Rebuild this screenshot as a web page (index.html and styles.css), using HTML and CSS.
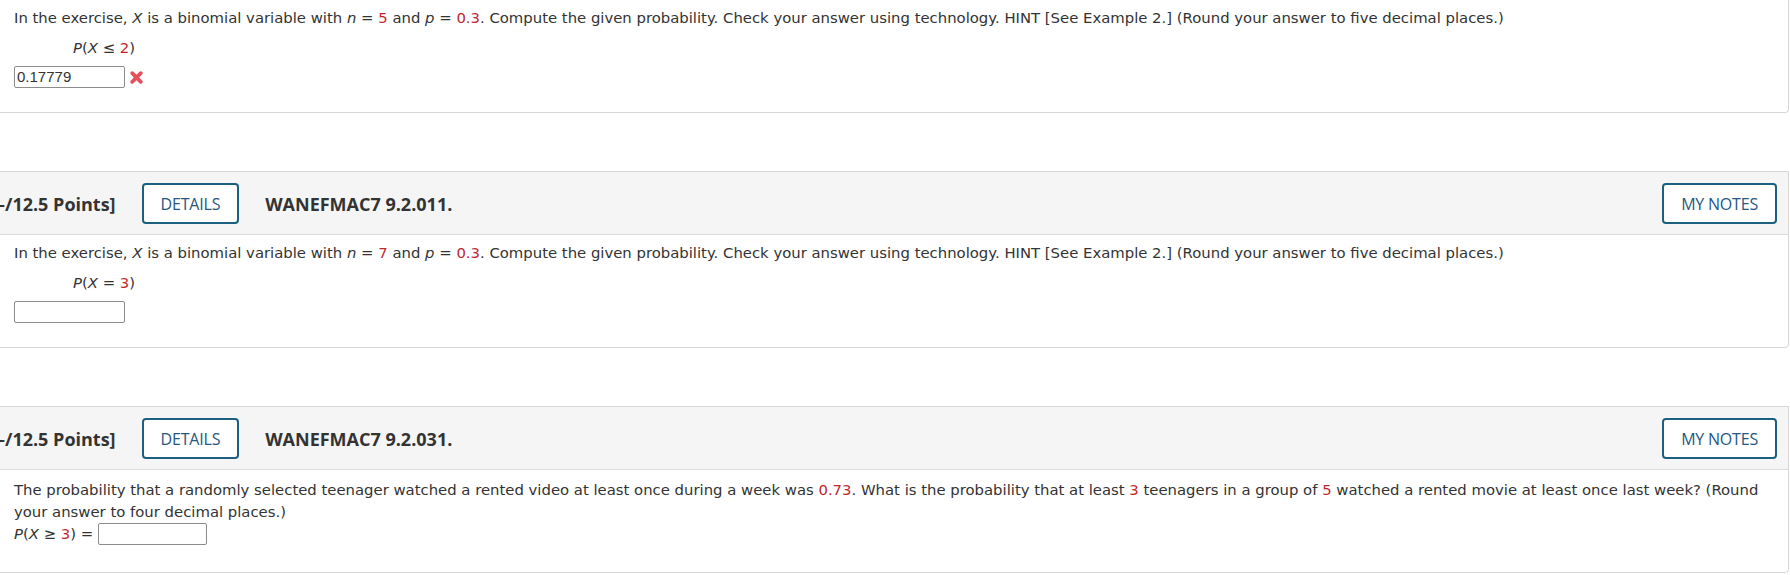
FILE: index.html
```html
<!DOCTYPE html>
<html>
<head>
<meta charset="utf-8">
<link rel="stylesheet" href="styles.css">
</head>
<body>
<div class="page">
  <section class="card card-first">
    <div class="card-body">
      <p class="stem">In the exercise, <i>X</i> is a binomial variable with <i>n</i> = <span class="red">5</span> and <i>p</i> = <span class="red">0.3</span>. Compute the given probability. Check your answer using technology. HINT [See Example 2.] (Round your answer to five decimal places.)</p>
      <p class="expr"><i>P</i>(<i>X</i> ≤ <span class="red">2</span>)</p>
      <div class="answer-row">
        <span class="answer">0.17779</span>
        <svg class="wrong" width="15" height="15" viewBox="0 0 15 15"><path d="M3.2 3.2 L11.8 11.8 M11.8 3.2 L3.2 11.8" stroke="#e4515a" stroke-width="3.8" stroke-linecap="round"/></svg>
      </div>
    </div>
  </section>

  <section class="card">
    <header class="card-head">
      <span class="points">[–/12.5 Points]</span>
      <span class="btn">DETAILS</span>
      <span class="qid">WANEFMAC7 9.2.011.</span>
      <span class="spacer"></span>
      <span class="btn">MY NOTES</span>
    </header>
    <div class="card-body">
      <p class="stem">In the exercise, <i>X</i> is a binomial variable with <i>n</i> = <span class="red">7</span> and <i>p</i> = <span class="red">0.3</span>. Compute the given probability. Check your answer using technology. HINT [See Example 2.] (Round your answer to five decimal places.)</p>
      <p class="expr"><i>P</i>(<i>X</i> = <span class="red">3</span>)</p>
      <div class="answer-row">
        <span class="answer"></span>
      </div>
    </div>
  </section>

  <section class="card card-last">
    <header class="card-head">
      <span class="points">[–/12.5 Points]</span>
      <span class="btn">DETAILS</span>
      <span class="qid">WANEFMAC7 9.2.031.</span>
      <span class="spacer"></span>
      <span class="btn">MY NOTES</span>
    </header>
    <div class="card-body card-body-last">
      <p class="stem stem-wrap">The probability that a randomly selected teenager watched a rented video at least once during a week was <span class="red">0.73</span>. What is the probability that at least <span class="red">3</span> teenagers in a group of <span class="red">5</span> watched a rented movie at least once last week? (Round your answer to four decimal places.)<br><i>P</i>(<i>X</i> ≥ <span class="red">3</span>) = <span class="answer inline"></span></p>
    </div>
  </section>
</div>
</body>
</html>
```

FILE: styles.css
```css
html, body {
  margin: 0;
  padding: 0;
  background: #ffffff;
  overflow: hidden;
}

.page {
  margin-left: -20px;
  width: 1809px;
  font-family: "DejaVu Sans", Verdana, sans-serif;
  font-size: 14.85px;
  color: #333333;
}

.card {
  border: 1px solid #d6d6d6;
  border-radius: 0 0 4px 4px;
  margin-bottom: 58px;
}

.card-first {
  margin-top: -1px;
  border-top-color: transparent;
}

.card-head {
  display: flex;
  align-items: center;
  background: #f5f5f5;
  border-bottom: 1px solid #dcdcdc;
  padding: 11px 11px 10px 9px;
  font-family: "Open Sans", sans-serif;
}

.points {
  font-weight: 700;
  font-size: 18px;
  color: #333;
  margin-right: 26px;
}

.qid {
  font-weight: 700;
  font-size: 18px;
  color: #333;
  margin-left: 26px;
}

.spacer { flex: 1; }

.btn {
  display: inline-flex;
  align-items: center;
  justify-content: center;
  box-sizing: border-box;
  height: 41px;
  padding: 0 17px;
  border: 2px solid #1d5f80;
  border-radius: 4px;
  background: #ffffff;
  color: #265781;
  font-size: 16px;
  letter-spacing: -0.2px;
}

.card-body {
  padding: 7px 11px 24px 33px;
}

.card-body-last {
  padding-top: 9px;
  padding-bottom: 27px;
}

.stem {
  margin: 0;
  line-height: 22px;
}

.stem-wrap {
  max-width: 1745px;
}

.expr {
  margin: 8px 0 0 59px;
  line-height: 22px;
}

.red { color: #c1272d; }

i { font-style: italic; }

.answer-row {
  display: flex;
  align-items: center;
  margin-top: 7px;
}

.answer {
  display: inline-block;
  box-sizing: border-box;
  width: 111px;
  height: 22px;
  border: 1px solid #8c8c8c;
  border-radius: 2px;
  font-family: "Liberation Sans", Arial, sans-serif;
  font-size: 15px;
  line-height: 20px;
  padding-left: 2px;
  color: #333;
  background: #fff;
}

.answer.inline {
  width: 109px;
  vertical-align: top;
}

.wrong {
  margin-left: 4px;
  margin-top: 1px;
}
```
